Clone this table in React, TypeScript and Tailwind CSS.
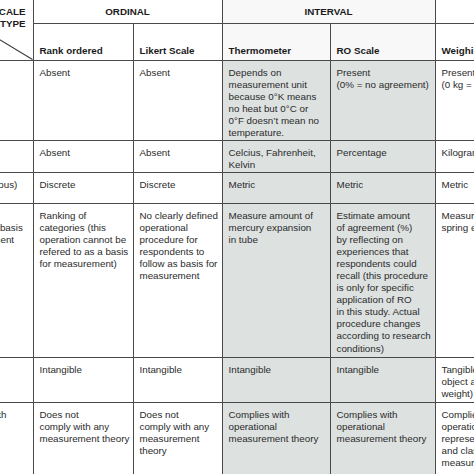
import React from 'react';

type Cell = { lines: string[]; gray?: boolean };

const font = { fontFamily: '"Liberation Sans", Arial, Helvetica, sans-serif' };

const rows: { h: string; label: string[]; cells: Cell[] }[] = [
  {
    h: 'h-[80px]',
    label: ['Zero point'],
    cells: [
      { lines: ['Absent'] },
      { lines: ['Absent'] },
      {
        gray: true,
        lines: [
          'Depends on',
          'measurement unit',
          'because 0°K means',
          'no heat but 0°C or',
          '0°F doesn’t mean no',
          'temperature.',
        ],
      },
      { gray: true, lines: ['Present', '(0% = no agreement)'] },
      { lines: ['Present', '(0 kg = no weight)'] },
    ],
  },
  {
    h: 'h-[32px]',
    label: ['Unit'],
    cells: [
      { lines: ['Absent'] },
      { lines: ['Absent'] },
      { gray: true, lines: ['Celcius, Fahrenheit,', 'Kelvin'] },
      { gray: true, lines: ['Percentage'] },
      { lines: ['Kilogram'] },
    ],
  },
  {
    h: 'h-[31px]',
    label: ['Data (continuous)'],
    cells: [
      { lines: ['Discrete'] },
      { lines: ['Discrete'] },
      { gray: true, lines: ['Metric'] },
      { gray: true, lines: ['Metric'] },
      { lines: ['Metric'] },
    ],
  },
  {
    h: 'h-[154px]',
    label: ['Operational', 'procedure as basis', 'for measurement'],
    cells: [
      {
        lines: [
          'Ranking of',
          'categories (this',
          'operation cannot be',
          'refered to as a basis',
          'for measurement)',
        ],
      },
      {
        lines: [
          'No clearly defined',
          'operational',
          'procedure for',
          'respondents to',
          'follow as basis for',
          'measurement',
        ],
      },
      { gray: true, lines: ['Measure amount of', 'mercury expansion', 'in tube'] },
      {
        gray: true,
        lines: [
          'Estimate amount',
          'of agreement (%)',
          'by reflecting on',
          'experiences that',
          'respondents could',
          'recall (this procedure',
          'is only for specific',
          'application of RO',
          'in this study. Actual',
          'procedure changes',
          'according to research',
          'conditions)',
        ],
      },
      { lines: ['Measure amount of', 'spring expansion'] },
    ],
  },
  {
    h: 'h-[45px]',
    label: ['Tangibility'],
    cells: [
      { lines: ['Intangible'] },
      { lines: ['Intangible'] },
      { gray: true, lines: ['Intangible'] },
      { gray: true, lines: ['Intangible'] },
      { lines: ['Tangible (physical', 'object and its', 'weight)'] },
    ],
  },
  {
    h: 'h-[90px]',
    label: ['Consistent with', 'theories'],
    cells: [
      { lines: ['Does not', 'comply with any', 'measurement theory'] },
      { lines: ['Does not', 'comply with any', 'measurement', 'theory'] },
      { gray: true, lines: ['Complies with', 'operational', 'measurement theory'] },
      { gray: true, lines: ['Complies with', 'operational', 'measurement theory'] },
      {
        lines: [
          'Complies with',
          'operational',
          'representational',
          'and classical',
          'measurement theory',
        ],
      },
    ],
  },
];

function Lines({ lines }: { lines: string[] }) {
  return (
    <>
      {lines.map((l, i) => (
        <div key={i} className="whitespace-nowrap">
          {l}
        </div>
      ))}
    </>
  );
}

export default function App() {
  return (
    <div className="w-[474px] h-[474px] overflow-hidden bg-white" style={font}>
      <table className="-ml-[66px] w-[631px] table-fixed border-collapse text-[9.8px] leading-[12.1px] text-[#2b2b2b]">
        <colgroup>
          <col className="w-[99px]" />
          <col className="w-[100px]" />
          <col className="w-[89px]" />
          <col className="w-[108px]" />
          <col className="w-[105px]" />
          <col className="w-[130px]" />
        </colgroup>
        <thead className="font-bold text-[#1a1a1a]">
          <tr className="h-[23px]">
            <th rowSpan={2} className="relative border-r border-b border-[#4a4a4a] p-0 align-top text-right">
              <div className="pt-[6px] pr-[7px]">
                SCALE
                <br />
                TYPE
              </div>
              <svg className="absolute inset-0 w-full h-full" viewBox="0 0 100 100" preserveAspectRatio="none">
                <line x1="0" y1="0" x2="100" y2="100" stroke="#3a3a3a" strokeWidth="1.1" vectorEffect="non-scaling-stroke" />
              </svg>
            </th>
            <th colSpan={2} className="border-x border-b border-[#4a4a4a] pt-[6px] align-top text-center">
              ORDINAL
            </th>
            <th colSpan={2} className="border-x border-b border-[#4a4a4a] bg-[#f8f8f8] pt-[6px] align-top text-center">
              INTERVAL
            </th>
            <th className="border-x border-b border-[#4a4a4a] pt-[6px] align-top text-center">RATIO</th>
          </tr>
          <tr className="h-[37px]">
            <th className="border border-[#4a4a4a] px-[6px] pb-[2px] align-bottom text-left whitespace-nowrap">Rank ordered</th>
            <th className="border border-[#4a4a4a] px-[6px] pb-[2px] align-bottom text-left whitespace-nowrap">Likert Scale</th>
            <th className="border border-[#4a4a4a] bg-[#f8f8f8] px-[6px] pb-[2px] align-bottom text-left whitespace-nowrap">Thermometer</th>
            <th className="border border-[#4a4a4a] bg-[#f8f8f8] px-[6px] pb-[2px] align-bottom text-left whitespace-nowrap">RO Scale</th>
            <th className="border border-[#4a4a4a] px-[6px] pb-[2px] align-bottom text-left whitespace-nowrap">Weighing scale</th>
          </tr>
        </thead>
        <tbody>
          {rows.map((r, i) => (
            <tr key={i} className={r.h}>
              <td className="border-y border-r border-[#4a4a4a] px-[6px] pt-[6px] align-top">
                <Lines lines={r.label} />
              </td>
              {r.cells.map((c, j) => (
                <td
                  key={j}
                  className={`border border-[#4a4a4a] px-[6px] pt-[6px] align-top ${c.gray ? 'bg-[#dde1e0]' : ''}`}
                >
                  <Lines lines={c.lines} />
                </td>
              ))}
            </tr>
          ))}
        </tbody>
      </table>
    </div>
  );
}
